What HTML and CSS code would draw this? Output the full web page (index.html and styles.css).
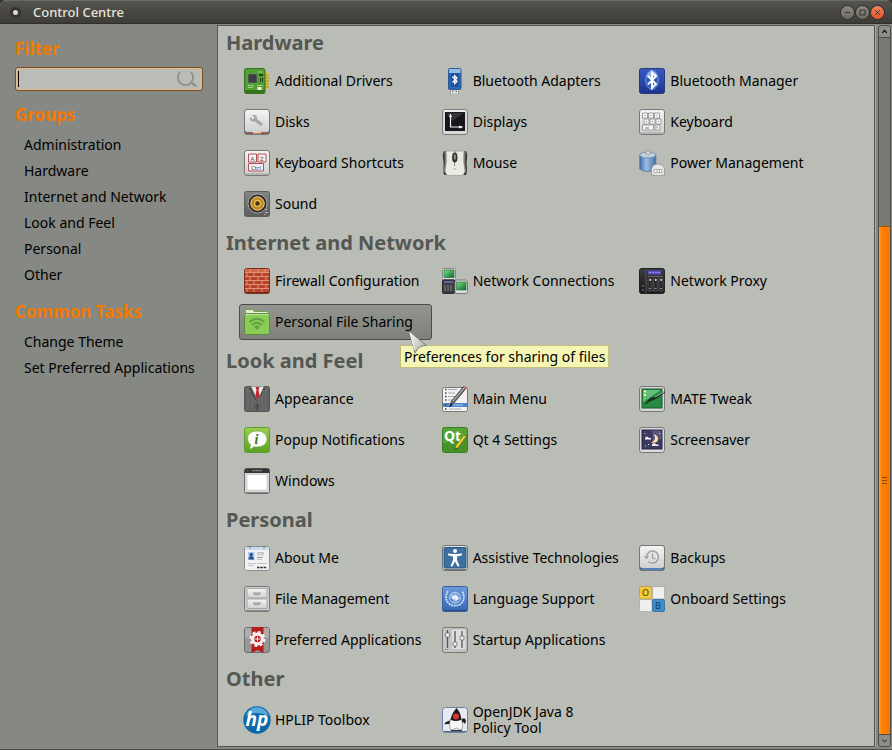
FILE: index.html
```html
<!DOCTYPE html>
<html lang="en-GB">
<head>
<meta charset="utf-8">
<title>Control Centre</title>
<link rel="stylesheet" href="styles.css">
</head>
<body>
<svg class="defs" width="0" height="0" aria-hidden="true">
  <defs>
    <linearGradient id="light" x1="0" y1="0" x2="0" y2="1"><stop offset="0" stop-color="#f4f4f4"/><stop offset="1" stop-color="#cfcfcf"/></linearGradient>
    <linearGradient id="grey" x1="0" y1="0" x2="0" y2="1"><stop offset="0" stop-color="#858585"/><stop offset="1" stop-color="#5c5c5c"/></linearGradient>
    <linearGradient id="dark" x1="0" y1="0" x2="0" y2="1"><stop offset="0" stop-color="#3c3c3e"/><stop offset="1" stop-color="#18181a"/></linearGradient>
    <linearGradient id="green" x1="0" y1="0" x2="0" y2="1"><stop offset="0" stop-color="#9ad04c"/><stop offset="1" stop-color="#5ba022"/></linearGradient>
    <linearGradient id="blue" x1="0" y1="0" x2="0" y2="1"><stop offset="0" stop-color="#3a5bc4"/><stop offset="1" stop-color="#1d348c"/></linearGradient>
    <linearGradient id="sky" x1="0" y1="0" x2="0" y2="1"><stop offset="0" stop-color="#6d9be0"/><stop offset="1" stop-color="#3465b0"/></linearGradient>
    <linearGradient id="drum" x1="0" y1="0" x2="1" y2="0"><stop offset="0" stop-color="#3e6da6"/><stop offset=".4" stop-color="#9dbfe2"/><stop offset="1" stop-color="#426fa6"/></linearGradient>
    <linearGradient id="screen" x1="0" y1="0" x2="1" y2="1"><stop offset="0" stop-color="#7be08a"/><stop offset="1" stop-color="#0d6b28"/></linearGradient>
    <linearGradient id="pointer" x1="0" y1="0" x2="1" y2="1"><stop offset="0" stop-color="#fafafa"/><stop offset="1" stop-color="#a9aba6"/></linearGradient>
  </defs>
</svg>

<div class="window">
  <header class="titlebar">
    <span class="menu-dot"></span>
    <h1 class="title">Control Centre</h1>
    <div class="window-buttons">
      <button class="wbtn" aria-label="Minimise"><svg viewBox="0 0 13 13"><path d="M4 6.5h5"/></svg></button>
      <button class="wbtn" aria-label="Maximise"><svg viewBox="0 0 13 13"><path d="M4 4h5v5h-5z"/></svg></button>
      <button class="wbtn close" aria-label="Close"><svg viewBox="0 0 13 13"><path d="M4.2 4.2l4.6 4.6M8.8 4.2l-4.6 4.6"/></svg></button>
    </div>
  </header>

  <div class="body">
    <aside class="sidebar">
      <label class="side-head" for="filter">Filter</label>
      <div class="search">
        <input id="filter" type="text">
        <svg class="lens" viewBox="0 0 22 18" aria-hidden="true"><path d="M4.200 2a7.600 7.600 0 1 0 10.600 0" fill="none" stroke="#8f928b" stroke-width="1.800"/><path d="M14.500 12.500l2.500-.5 5 4.500h-4.500z" fill="#8f928b"/></svg>
      </div>
      <h2 class="side-head">Groups</h2>
      <ul class="links">
        <li><a href="#administration">Administration</a></li>
        <li><a href="#hardware">Hardware</a></li>
        <li><a href="#internet">Internet and Network</a></li>
        <li><a href="#look">Look and Feel</a></li>
        <li><a href="#personal">Personal</a></li>
        <li><a href="#other">Other</a></li>
      </ul>
      <h2 class="side-head">Common Tasks</h2>
      <ul class="links">
        <li><a href="#theme">Change Theme</a></li>
        <li><a href="#preferred">Set Preferred Applications</a></li>
      </ul>
    </aside>

    <main class="pane">
      <section id="hardware">
        <h2 class="group-head">Hardware</h2>
        <div class="grid">
          <button class="item">
            <svg class="icon" viewBox="0 0 26 26"><path d="M20 4h4.500v17H20z" fill="#e0c23a"/><path d="M20 7h5M20 10h5M20 13h5M20 16h5M20 19h5" stroke="#8c8a2a" stroke-width=".8"/><rect x=".5" y=".5" width="20.500" height="25" rx="2" fill="#4fa02e" stroke="#3a6e22"/><path d="M1 22h20v2q0 1.500-1.500 1.500h-17Q1 25.500 1 24z" fill="#35741d"/><rect x="4" y="6" width="9" height="9" fill="#3b3f42" stroke="#8b9a86" stroke-width=".8" stroke-dasharray="1 .7"/><path d="M15 6h4v2h-4zM16 10h1v4h-1zM18 10h1v4h-1z" fill="#20431a"/><path d="M4 17.500h6M4 19.500h5M13 17.500h6M14 4h5" stroke="#b9dba0" stroke-width=".8"/><rect x="13.500" y="19" width="4" height="3" fill="#f2f2d8"/></svg>
            <span>Additional Drivers</span>
          </button>
          <button class="item">
            <svg class="icon" viewBox="0 0 26 26"><path d="M8.500 20h8v6h-8z" fill="#e4e4e4" stroke="#8e8e8e" stroke-width=".7"/><path d="M10 22.500h1.500v1.500H10zM13.500 22.500H15v1.500h-1.500z" fill="#777"/><rect x="6.500" y=".5" width="12.500" height="21" rx="1.500" fill="#2d67b4" stroke="#2a5795"/><path d="M7 1h11.500v4H7z" fill="#98bbe2"/><rect x="8.500" y="5" width="8.500" height="14" fill="#1d54a2"/><path d="M10.500 8.500l4.500 5-2.300 2.200v-8l2.300 2.200-4.500 4.600" fill="none" stroke="#fff" stroke-width="1.200"/></svg>
            <span>Bluetooth Adapters</span>
          </button>
          <button class="item">
            <svg class="icon" viewBox="0 0 26 26"><rect x=".5" y=".5" width="25" height="25" rx="2" fill="url(#blue)" stroke="#263b80"/><ellipse cx="13" cy="12" rx="6.300" ry="9.500" fill="#2b5cc0" stroke="#86a7ea" stroke-width=".8"/><path d="M7.500 9c1-8 10-8 11 0q-5 2-11 0z" fill="#8daee8"/><path d="M9 8l8 8-4 4V4.500l4 3.800-8 8" fill="none" stroke="#fff" stroke-width="1.900"/></svg>
            <span>Bluetooth Manager</span>
          </button>
          <button class="item">
            <svg class="icon" viewBox="0 0 26 26"><rect x=".5" y=".5" width="25" height="25" rx="2.500" fill="#666" stroke="#777"/><rect x="1" y="1" width="24" height="22" rx="2" fill="url(#light)"/><path d="M3 24h20" stroke="#b8584a" stroke-width="1.200"/><path d="M9 23.700h8" stroke="#ffd2a0" stroke-width="1.200"/><path d="M9.500 9.500l8 6" stroke="#a5a5a5" stroke-width="3"/><circle cx="9.500" cy="9.300" r="2.500" fill="none" stroke="#a5a5a5" stroke-width="2"/><path d="M5.500 5.500l4 3.500" stroke="#e5e5e5" stroke-width="2.500"/><circle cx="17" cy="15.200" r="1.200" fill="#e5e5e5" stroke="#999"/></svg>
            <span>Disks</span>
          </button>
          <button class="item">
            <svg class="icon" viewBox="0 0 26 26"><rect x=".5" y=".5" width="25" height="25" rx="2.500" fill="#d8d8d8" stroke="#7d7d7d"/><path d="M2 2h22" stroke="#fff"/><rect x="3" y="3" width="20" height="19" fill="#17161c"/><path d="M4 4h18L10 12z" fill="#35333b"/><path d="M8.500 5v13h12" stroke="#eee" stroke-width="1.200" fill="none"/><path d="M7 8l1.500-3L10 8zM17 16.500v3l4-1.500z" fill="#fff"/></svg>
            <span>Displays</span>
          </button>
          <button class="item">
            <svg class="icon" viewBox="0 0 26 26"><rect x=".5" y=".5" width="25" height="25" rx="2.500" fill="url(#light)" stroke="#777"/><path d="M2 24h22" stroke="#999"/><g fill="#f8f8f8" stroke="#888" stroke-width=".8"><path d="M3.500 4h5v5h-5zM9.500 4h5v5h-5zM15.500 4h5v5h-5zM5 10h5v5H5zM11 10h5v5h-5zM17 10h5v5h-5zM3.500 16h11v5h-11zM16 16h5v5h-5z"/></g><path d="M5.500 6.500h1M11.500 6.500h1M17.500 6.500h1M7 12.500h1M13 12.500h1M19 12.500h1M6 19h4M18 17.500v2" stroke="#777"/></svg>
            <span>Keyboard</span>
          </button>
          <button class="item">
            <svg class="icon" viewBox="0 0 26 26"><rect x=".5" y=".5" width="25" height="25" rx="2.500" fill="url(#light)" stroke="#777"/><path d="M2 24h22" stroke="#999"/><g fill="#f5f2f2" stroke="#b45055"><path d="M4.500 4h8v8h-8zM14 4h8v8h-8zM4.500 13.500h15v7.500h-15z"/></g><text x="6.500" y="10.500" class="t-key">A</text><text x="16" y="10.500" class="t-key">Z</text><text x="7" y="19.500" class="t-key">Ctrl</text></svg>
            <span>Keyboard Shortcuts</span>
          </button>
          <button class="item">
            <svg class="icon" viewBox="0 0 26 26"><path d="M2 1h22q2 3 1 7-1 5 0 10 0 5-1 7H2.500q-1.500-2-1-7Q2 13 1 8 0 4 2 1z" fill="#34342f"/><path d="M3 1q1 11-.5 21M23 1q-1 11 .5 21" stroke="#8d8c86" fill="none"/><path d="M4 1h18q-1 11 1 20-1 4-3 4.500H6Q4 25 3 21 5 12 4 1z" fill="#ebeae1" stroke="#9a9a90" stroke-width=".7"/><path d="M13 1v3M12.500 11v5" stroke="#888"/><ellipse cx="12.800" cy="7.500" rx="2.700" ry="5" fill="#34342f"/><ellipse cx="12.800" cy="7" rx="1" ry="3" fill="#999"/><path d="M11.500 18l2 2M13.500 18l-2 2" stroke="#bbb"/></svg>
            <span>Mouse</span>
          </button>
          <button class="item">
            <svg class="icon" viewBox="0 0 26 26"><path d="M17 6q5-5 5 1t-3 8" stroke="#b9bcbc" stroke-width="2" fill="none"/><path d="M.8 5v14q8 5 16 0V5z" fill="url(#drum)" stroke="#4a6d94" stroke-width=".8"/><ellipse cx="8.800" cy="5" rx="8" ry="3" fill="#bfd0df" stroke="#6d8caa" stroke-width=".8"/><path d="M7 1h4v3H7z" fill="#ddd" stroke="#888" stroke-width=".6"/><path d="M12.500 25v-6q1-5 6.500-5t6.500 5v6q-6 1.500-13 0z" fill="#e6e6e2" stroke="#8e918c" stroke-width=".8"/><path d="M15 19.500h8v3h-8z" fill="#fff" stroke="#999" stroke-width=".8"/><path d="M18 20v2M20.500 20v2" stroke="#888" stroke-width=".7"/></svg>
            <span>Power Management</span>
          </button>
          <button class="item">
            <svg class="icon" viewBox="0 0 26 26"><rect x=".5" y=".5" width="25" height="25" rx="2" fill="url(#grey)" stroke="#5e5e5e"/><circle cx="13.500" cy="12.500" r="9.500" fill="#292929" stroke="#aaa"/><circle cx="13.500" cy="12.500" r="6.800" fill="#c98e25" stroke="#e9ca80"/><circle cx="13.500" cy="12.500" r="4.500" fill="#e2b64f" stroke="#a87a25"/><circle cx="13.500" cy="12.500" r="2.200" fill="#463211"/><path d="M21.500 21.500h2M22 18.500h1M20.500 23.500h1" stroke="#ddd"/></svg>
            <span>Sound</span>
          </button>
        </div>
      </section>

      <section id="internet">
        <h2 class="group-head">Internet and Network</h2>
        <div class="grid">
          <button class="item">
            <svg class="icon" viewBox="0 0 26 26"><rect x=".5" y=".5" width="25" height="25" rx="2" fill="#b8432a" stroke="#84301f"/><path d="M1 1h24v4H1z" fill="#d26a4e"/><path d="M1 4.500h24M1 8.500h24M1 12.500h24M1 16.500h24M1 20.500h24M6 1v3.500M14 1v3.500M21 1v3.500M3 4.500v4M10 4.500v4M18 4.500v4M6 8.500v4M14 8.500v4M22 8.500v4M3 12.500v4M10 12.500v4M18 12.500v4M6 16.500v4M14 16.500v4M22 16.500v4M3 20.500V25M10 20.500V25M18 20.500V25" stroke="#df9c84" stroke-width=".9"/><path d="M1 24.500h24" stroke="#6e2a1a"/></svg>
            <span>Firewall Configuration</span>
          </button>
          <button class="item">
            <svg class="icon" viewBox="0 0 26 26"><rect x=".5" y=".5" width="13" height="11" rx="1" fill="#ddd" stroke="#888"/><path d="M2 2h10v7.500H2z" fill="url(#screen)" stroke="#1d6a35" stroke-width=".6"/><rect x=".5" y="12" width="12" height="13.500" rx="1" fill="#3b3b46" stroke="#2b2b30"/><path d="M2 14h9" stroke="#7671b8" stroke-width="1.500"/><path d="M3 17v6M6 17v6M9 17v6" stroke="#888"/><rect x="13" y="12" width="12.500" height="13.500" rx="2" fill="#ddd" stroke="#777"/><path d="M14.500 14H24v8h-9.500z" fill="url(#screen)" stroke="#1d6a35" stroke-width=".6"/></svg>
            <span>Network Connections</span>
          </button>
          <button class="item">
            <svg class="icon" viewBox="0 0 26 26"><rect x=".5" y=".5" width="25" height="25" rx="2" fill="url(#dark)" stroke="#222"/><path d="M7 1v24" stroke="#565658"/><rect x="9" y="2.500" width="13" height="4" fill="#544fc4"/><path d="M10 4.500h11" stroke="#8f8cf0" stroke-dasharray="2 1"/><path d="M9 8.500h15" stroke="#666"/><path d="M9 11h4v12H9zM14.500 11h4v12h-4zM20 11h4v12h-4z" fill="#2b2b2d" stroke="#59595b" stroke-width=".7"/><path d="M10.500 12h1.500M16 12h1.500M21.500 12H23" stroke="#fff" stroke-width="1.500"/><path d="M10 20.500h2M15.500 20.500h2M21 20.500h2" stroke="#888"/><circle cx="4" cy="18" r="1" fill="#666"/><circle cx="4" cy="22" r="1" fill="#666"/></svg>
            <span>Network Proxy</span>
          </button>
          <div class="item-wrap">
            <button class="item hover" aria-describedby="tip">
              <svg class="icon" viewBox="0 0 26 26"><path d="M1.500 6V1.500Q1.500.5 2.500.5h6q1 0 1.500 2H24V6z" fill="#dff0c8" stroke="#73a548"/><path d="M3 3.500h20V7H3z" fill="#eef3e8"/><rect x=".5" y="4.500" width="25" height="21" rx="2" fill="#8bcb58" stroke="#5a8d38"/><path d="M1.500 5.500h23" stroke="#bbe59a"/><path d="M5.500 13q7.500-6.500 15 0M8 16q5-4.500 10 0" fill="none" stroke="#5f9f3d" stroke-width="1.800"/><path d="M10 17.500q3-2 6 0L13 21z" fill="#5f9f3d"/></svg>
              <span>Personal File Sharing</span>
            </button>
            <div class="tooltip" id="tip" role="tooltip">Preferences for sharing of files</div>
            <svg class="cursor" viewBox="0 0 20 24" aria-hidden="true"><path d="M1 1l17.500 14.500q-8-.5-11.500 7.500Z" fill="url(#pointer)" stroke="#747670" stroke-width=".9"/><path d="M2 2.500l4.500 17" stroke="#fff" fill="none"/></svg>
          </div>
        </div>
      </section>

      <section id="look">
        <h2 class="group-head">Look and Feel</h2>
        <div class="grid">
          <button class="item">
            <svg class="icon" viewBox="0 0 26 26"><rect x=".5" y=".5" width="25" height="25" rx="2" fill="#626262" stroke="#555"/><path d="M4 1v24M22 1v24M8 8v17M18 8v17" stroke="#757575" stroke-width=".7"/><path d="M7 .5h13L13.500 15z" fill="#ececf0"/><path d="M11.500 1h4l-1 3 1.500 7-2.500 4-2.500-4 1.500-7z" fill="#c22730"/><path d="M7 .5L3 4l4 1-1 2 7 10.500L20 7l-1-2 4-1-3-3.500L13.500 15z" fill="#4b4b4b" stroke="#868686" stroke-width=".6"/><path d="M13.500 17v8" stroke="#404040"/><circle cx="12" cy="20" r=".8" fill="#333"/></svg>
            <span>Appearance</span>
          </button>
          <button class="item">
            <svg class="icon" viewBox="0 0 26 26"><rect x=".5" y="1.500" width="25" height="24" rx="2" fill="#f2f2f2" stroke="#777"/><path d="M1 17h24v4H1z" fill="#4d86cf"/><path d="M6 3.500h9M6 7h7M6 10.500h9M6 14h7M7 23h12" stroke="#aaa"/><path d="M7 19h14" stroke="#a9c8ef"/><path d="M3 3.500h1.500M3 7h1.500M3 10.500h1.500M3 14h1.500M3 19h1.500M3 23h1.500" stroke="#444" stroke-width="1.700"/><path d="M7.500 21l2-6L21.500.5l2.500 2L12 17z" fill="#686a6c" stroke="#333" stroke-width=".7"/><path d="M11 15L22 2" stroke="#c7c7c7"/><path d="M7.500 21l1.200-3.500 2 1.500z" fill="#222"/><path d="M21 .5h3l.5 2.500-1.500 1z" fill="#c06a65"/></svg>
            <span>Main Menu</span>
          </button>
          <button class="item">
            <svg class="icon" viewBox="0 0 26 26"><rect x=".5" y=".5" width="25" height="25" rx="2.500" fill="#d7d7d7" stroke="#777"/><rect x="3" y="3" width="20" height="19" fill="#258a42" stroke="#185b2b"/><path d="M4 4h18L4 16z" fill="#62bd78"/><path d="M5 5.500h2M5 9h2" stroke="#fbf4a8" stroke-width="2"/><path d="M6 18l5-5.500 4-1L26 6l-9 6.500-6 2.500z" fill="#263128" stroke="#172319" stroke-width=".7"/><path d="M16 11l9-5" stroke="#aab3ac"/></svg>
            <span>MATE Tweak</span>
          </button>
          <button class="item">
            <svg class="icon" viewBox="0 0 26 26"><rect x=".5" y=".5" width="25" height="25" rx="2" fill="url(#green)" stroke="#609b30"/><path d="M13 4c6 0 10 3.500 10 8s-4 8-10 8q-1.500 0-3-.3Q8 22 5 22q1.500-1.500 1.500-4Q3.500 15.500 3.500 12 3.500 4 13 4z" fill="#fafafa" stroke="#6aa13b" stroke-width=".6"/><text x="10.500" y="17" class="t-info">i</text></svg>
            <span>Popup Notifications</span>
          </button>
          <button class="item">
            <svg class="icon" viewBox="0 0 26 26"><rect x=".5" y=".5" width="25" height="25" rx="2" fill="#55a536" stroke="#3d8024"/><path d="M1 16q12 2 24-9v16q0 2-2 2H3q-2 0-2-2z" fill="#469229"/><text x="2" y="14" class="t-qt">Qt</text><path d="M13 23l1-4.500L22 8l2 1.500-8 11z" fill="#f1d03b" stroke="#8a7a20" stroke-width=".7"/><path d="M13 23l.7-2.500 1.500 1z" fill="#333"/></svg>
            <span>Qt 4 Settings</span>
          </button>
          <button class="item">
            <svg class="icon" viewBox="0 0 26 26"><rect x=".5" y=".5" width="25" height="25" rx="2.500" fill="#dcdcdc" stroke="#777"/><rect x="3" y="3" width="20" height="19" fill="#3d3a62" stroke="#28263f"/><path d="M13 3.500h9.500V12L14 14z" fill="#57547f"/><path d="M14.500 7q4 6-2.500 8.500 7 1.500 7-4Q18.500 8 14.500 7z" fill="#ffe3a0"/><path d="M6 11q2-3 4 0h2v1.500H6zM13 17.500q2-3 4 0h2.500V19H13z" fill="#f5f5ff"/><path d="M5.500 6.500h1M9 17.500h1M20 6.500h1M6 19h1" stroke="#ddd"/></svg>
            <span>Screensaver</span>
          </button>
          <button class="item">
            <svg class="icon" viewBox="0 0 26 26"><rect x=".5" y=".5" width="25" height="25" rx="2" fill="#d9d9d9" stroke="#6d6d6d"/><path d="M.5 5V2.500q0-2 2-2h21q2 0 2 2V5z" fill="#343434"/><path d="M8 2.700h10" stroke="#aaa" stroke-dasharray="1.500 .5"/><path d="M3 2.700h1.500" stroke="#c65a3a"/><rect x="3" y="6.500" width="20" height="15.500" fill="#fff" stroke="#c4c4c4" stroke-width=".6"/><path d="M2 24.500h22" stroke="#888"/></svg>
            <span>Windows</span>
          </button>
        </div>
      </section>

      <section id="personal">
        <h2 class="group-head">Personal</h2>
        <div class="grid">
          <button class="item">
            <svg class="icon" viewBox="0 0 26 26"><rect x=".5" y="1.500" width="25" height="24" rx="2" fill="#f0f1f2" stroke="#8b8d8e"/><path d="M1 2h24v3H1z" fill="#c8dcec"/><path d="M6 .5v3M20 .5v3" stroke="#777"/><rect x="4" y="7" width="6.500" height="8" fill="#b3cdee"/><circle cx="7.200" cy="9.500" r="1.700" fill="#285590"/><path d="M4.500 14.500q0-3.500 2.700-3.500t2.800 3.500z" fill="#285590"/><path d="M13 8h7M13 12.500h6" stroke="#999"/><path d="M13 10h7M13 14.500h5M4 18.500h8M4 20.500h6M13 18.500h10" stroke="#c4c4c4"/><path d="M13 22.500h10" stroke="#333" stroke-width="1.500" stroke-dasharray="2.500 .8"/></svg>
            <span>About Me</span>
          </button>
          <button class="item">
            <svg class="icon" viewBox="0 0 26 26"><rect x=".5" y=".5" width="25" height="25" rx="2.500" fill="#e7e7e7" stroke="#6e7174"/><rect x="2" y="2.500" width="22" height="20.500" rx="1" fill="#3d719f" stroke="#285580"/><circle cx="13" cy="6" r="2" fill="#fff"/><path d="M6 8.500l5 .5h4l5-.5v1.800l-5 1.200v3.500l2.500 6-1.700.7L13 16.500l-2.800 5.200-1.700-.7L11 15v-3.500l-5-1.200z" fill="#fff"/><path d="M2 24.500h22" stroke="#777"/></svg>
            <span>Assistive Technologies</span>
          </button>
          <button class="item">
            <svg class="icon" viewBox="0 0 26 26"><rect x=".5" y=".5" width="25" height="25" rx="2.500" fill="#555f6b" stroke="#777"/><rect x="1" y="1" width="24" height="22" rx="2" fill="url(#light)"/><path d="M3 24h20" stroke="#4f8fd4" stroke-width="1.500"/><path d="M7.500 12a6 6 0 1 1 2 4.500" fill="none" stroke="#a2a2a2" stroke-width="1.500"/><path d="M5 11h5l-2.500 3.500z" fill="#a2a2a2"/><path d="M13.500 8v4.500l3 1.500" fill="none" stroke="#a2a2a2" stroke-width="1.300"/></svg>
            <span>Backups</span>
          </button>
          <button class="item">
            <svg class="icon" viewBox="0 0 26 26"><rect x=".5" y=".5" width="25" height="25" rx="2.500" fill="#cfcfcf" stroke="#777"/><rect x="3" y="2.500" width="20" height="9.500" rx="1" fill="url(#light)" stroke="#999" stroke-width=".8"/><rect x="3" y="13" width="20" height="9.500" rx="1" fill="url(#light)" stroke="#999" stroke-width=".8"/><path d="M9 7q1 1.800 4 1.800T17 7zM9 17q1 1.800 4 1.800t4-1.800z" fill="#c4c4c4" stroke="#8a8a8a" stroke-width=".8"/><path d="M2 24.500h22" stroke="#888"/></svg>
            <span>File Management</span>
          </button>
          <button class="item">
            <svg class="icon" viewBox="0 0 26 26"><rect x=".5" y=".5" width="25" height="25" rx="2" fill="url(#sky)" stroke="#3b5f9e"/><g fill="none" stroke="#d5e4fa"><circle cx="13" cy="11.800" r="5.500" stroke-width=".8"/><path d="M7.500 12h11M13 6.500v11M9.500 8q3.500 3 7 0M9.500 16q3.500-3 7 0" stroke-width=".6"/><path d="M6 5Q1.500 13 7.500 18q2.500 2 5.500 1.500Q16 20 18.500 18 24.500 13 20 5" stroke-width="1.700" stroke-dasharray="2 .7"/></g><path d="M9 9l3 1 1-1 3 1 1 3-3 2-1-2-2 1z" fill="#e9f1fc"/><path d="M1 24.500h24" stroke="#284b83"/></svg>
            <span>Language Support</span>
          </button>
          <button class="item">
            <svg class="icon" viewBox="0 0 26 26"><rect x=".5" y=".5" width="12.500" height="12.500" rx="1.500" fill="#f3c93d" stroke="#b59d4d" stroke-width=".8"/><rect x="13.500" y=".5" width="12" height="12.500" rx="1.500" fill="#efefef" stroke="#aaa" stroke-width=".8"/><rect x=".5" y="13.500" width="12.500" height="12" rx="1.500" fill="#efefef" stroke="#aaa" stroke-width=".8"/><rect x="13.500" y="13.500" width="12" height="12" rx="1.500" fill="#3c8fc8" stroke="#2c6c99" stroke-width=".8"/><text x="3" y="9.500" class="t-board">O</text><text x="16" y="22.500" class="t-board b">B</text></svg>
            <span>Onboard Settings</span>
          </button>
          <button class="item">
            <svg class="icon" viewBox="0 0 26 26"><rect x=".5" y=".5" width="25" height="25" rx="2.500" fill="#979797" stroke="#707070"/><path d="M1 3q0-2 2-2h20q2 0 2 2v8H1z" fill="#adadad"/><path d="M7.500 0h12v26l-6-3-6 3z" fill="#b51c1c"/><circle cx="13.500" cy="12" r="6.800" fill="none" stroke="#f6eeee" stroke-width="2.500" stroke-dasharray="3 2.340"/><circle cx="13.500" cy="12" r="4.800" fill="none" stroke="#f6eeee" stroke-width="3.200"/><circle cx="13.500" cy="12" r="2.600" fill="#b51c1c"/><path d="M13.500 9.500v5M11 12h5" stroke="#f6eeee"/></svg>
            <span>Preferred Applications</span>
          </button>
          <button class="item">
            <svg class="icon" viewBox="0 0 26 26"><rect x=".5" y=".5" width="25" height="25" rx="2.500" fill="#c6c6c6" stroke="#777"/><rect x="9" y="2" width="15" height="21" rx="1" fill="#dedede" stroke="#aaa" stroke-width=".7"/><path d="M5.500 3v18M13 4v17M20 4v17" stroke="#555" stroke-width="1.300"/><g fill="#f1f1f1" stroke="#666" stroke-width=".8"><rect x="3.500" y="6" width="4" height="4" rx="1"/><rect x="11" y="15" width="4" height="4" rx="1"/><rect x="18" y="9" width="4" height="4" rx="1"/></g><path d="M3 22.500h4" stroke="#777" stroke-dasharray="1 1"/></svg>
            <span>Startup Applications</span>
          </button>
        </div>
      </section>

      <section id="other">
        <h2 class="group-head">Other</h2>
        <div class="grid">
          <button class="item">
            <svg class="icon spill" viewBox="0 0 26 26"><circle cx="13" cy="13" r="13.700" fill="#0d67a8"/><path d="M1.500 9Q5 .5 13 .3T25 9Q12 3 1.500 9z" fill="#5aa9d8"/><text x="1.500" y="18.500" class="t-hp">hp</text></svg>
            <span>HPLIP Toolbox</span>
          </button>
          <button class="item">
            <svg class="icon" viewBox="0 0 26 26"><rect x=".5" y=".5" width="25" height="25" rx="3" fill="#e7eaf1" stroke="#6f82a5"/><path d="M2 24.500h22" stroke="#52698f"/><path d="M9 13l-5 2-2 2.500 2.500-.5L9 17zM19 13q4-4 5 1l-1 3-2-2-3 2z" fill="#1c1c1e"/><path d="M8.500 12h11q2 7 .5 11-3-.5-5.500-2-3 2-6 2-2-5 0-11z" fill="#f7f7f4" stroke="#777" stroke-width=".6"/><path d="M14.500 1q-4.500 5-6 11.500 5 3 11 0Q18.500 5 14.500 1z" fill="#1c1c1e"/><circle cx="14" cy="9.500" r="3" fill="#da3430"/><path d="M9 23.500h11" stroke="#333"/></svg>
            <span class="two-line">OpenJDK Java 8 Policy Tool</span>
          </button>
        </div>
      </section>
    </main>

    <div class="scrollbar">
      <button class="step" aria-label="Scroll up"><svg viewBox="0 0 12 11"><path d="M3.500 7L6 4.500 8.500 7"/></svg></button>
      <div class="trough"><div class="thumb"><i></i><i></i><i></i></div></div>
      <button class="step down" aria-label="Scroll down"><svg viewBox="0 0 12 11"><path d="M3.500 4.500L6 7l2.500-2.500"/></svg></button>
    </div>
  </div>
</div>
</body>
</html>
```
FILE: styles.css
```css
* {
  box-sizing: border-box;
}

body {
  margin: 0;
  background: #33322e;
  color: #000;
  font: 14px/16px "Noto Sans", "Open Sans", sans-serif;
}

button {
  margin: 0;
  padding: 0;
  border: 0;
  background: none;
  color: inherit;
  font: inherit;
  text-align: left;
}

h1,
h2,
ul {
  margin: 0;
  padding: 0;
  list-style: none;
}

.defs {
  position: absolute;
}

.window {
  display: flex;
  flex-direction: column;
  min-height: 100vh;
  background: #868883;
  border-radius: 6px 6px 0 0;
  overflow: hidden;
}

/* Title bar */
.titlebar {
  display: flex;
  align-items: center;
  height: 24px;
  padding: 0 8px 0 10px;
  background: linear-gradient(#55534d, #3d3c37);
  border-top: 1px solid #6a6963;
  border-bottom: 1px solid #2f2e2a;
}

.menu-dot {
  width: 11px;
  height: 11px;
  border: 3px solid #35342f;
  border-radius: 50%;
  background: #dfdbd2;
}

.title {
  flex: 1;
  margin-left: 12px;
  color: #e6e3dc;
  font-size: 13px;
  font-weight: 500;
}

.window-buttons {
  display: flex;
  gap: 2px;
}

.wbtn {
  width: 13px;
  height: 13px;
  border-radius: 50%;
  background: linear-gradient(#8b8982, #6b6963);
  box-shadow: 0 0 0 1px #33322e;
}

.wbtn svg {
  display: block;
  fill: none;
  stroke: #35342f;
}

.wbtn.close {
  background: linear-gradient(#f4845d, #e2542a);
}

/* Layout */
.body {
  flex: 1;
  display: flex;
  padding: 1px 1px 2px 0;
  border-bottom: 1px solid #4c4d49;
}

.sidebar {
  flex: none;
  width: 217px;
  padding: 8px 14px 0 15px;
}

.side-head {
  display: block;
  height: 33px;
  color: #f57900;
  font-size: 17px;
  font-weight: 700;
  line-height: 31px;
}

.search {
  position: relative;
  margin: 1px 0 8px;
}

.search input {
  display: block;
  width: 100%;
  height: 24px;
  padding: 0 28px 0 3px;
  border: 1px solid #7d4d1e;
  border-radius: 3px;
  background: #babdb6;
  box-shadow: inset 0 0 0 1px #e0bd94;
  font: inherit;
}

.search::before {
  content: "";
  position: absolute;
  top: 4px;
  left: 3px;
  width: 1px;
  height: 16px;
  background: #000;
}

.lens {
  position: absolute;
  top: 3px;
  right: 5px;
  width: 22px;
  height: 18px;
}

.links {
  padding: 0 0 8px 9px;
}

.links li {
  line-height: 26px;
  white-space: nowrap;
}

.links a {
  color: inherit;
  text-decoration: none;
}

/* Launcher pane */
.pane {
  flex: 1;
  padding-top: 1px;
  border: 1px solid #555753;
  background: #babdb6;
  box-shadow: 1px 0 0 #a5a8a1;
}

.group-head {
  height: 33px;
  padding-left: 8px;
  color: #555753;
  font-size: 20px;
  font-weight: 700;
  line-height: 31px;
}

.grid {
  display: grid;
  grid-template-columns: repeat(3, 1fr);
  gap: 5px;
  padding: 3px 47px 5px 21px;
}

.item-wrap {
  position: relative;
}

.item {
  display: flex;
  align-items: center;
  gap: 5px;
  width: 100%;
  min-height: 36px;
  padding: 0 4px;
  border: 1px solid transparent;
  border-radius: 3px;
  white-space: nowrap;
}

.item.hover {
  border-color: #4b4d49;
  background: linear-gradient(#929590, #7d807b);
}

.two-line {
  max-width: 128px;
  padding: 4px 0;
  white-space: normal;
}

.icon {
  flex: none;
  width: 26px;
  height: 26px;
}

.icon.spill {
  overflow: visible;
}

.tooltip {
  position: absolute;
  top: 41px;
  left: 161px;
  z-index: 1;
  padding: 2px 3px;
  border: 1px solid #c2bd78;
  background: #f5f5b5;
  line-height: 17px;
  white-space: nowrap;
}

.cursor {
  position: absolute;
  top: 26px;
  left: 169px;
  z-index: 2;
  width: 20px;
  height: 24px;
}

/* Lettering inside icons */
.t-key {
  font: 6px "Noto Sans", sans-serif;
  fill: #444;
}

.t-info {
  font: italic 700 14px "Liberation Serif", serif;
  fill: #46741f;
}

.t-qt {
  font: 700 14px "Noto Sans", sans-serif;
  fill: #fff;
}

.t-board {
  font: 9px "Noto Sans", sans-serif;
  fill: #4a3d08;
}

.t-board.b {
  fill: #123c5c;
}

.t-hp {
  font: italic 700 19px "Open Sans", sans-serif;
  fill: #fff;
}

/* Scroll bar */
.scrollbar {
  flex: none;
  display: flex;
  flex-direction: column;
  width: 13px;
  margin-left: 3px;
  border: 1px solid #4c4d49;
  border-radius: 3px;
  background: #777974;
}

.step {
  flex: none;
  height: 11px;
  background: #8b8e88;
  border-radius: 2px 2px 0 0;
}

.step.down {
  border-radius: 0 0 2px 2px;
}

.step svg {
  display: block;
  width: 11px;
  height: 11px;
  fill: none;
  stroke: #111;
  stroke-width: 1.5;
}

.step.down svg {
  stroke: #4c4d49;
}

.trough {
  flex: 1;
  display: flex;
  flex-direction: column;
  justify-content: flex-end;
  border-top: 1px solid #4c4d49;
  border-bottom: 1px solid #4c4d49;
}

.thumb {
  display: flex;
  flex-direction: column;
  align-items: center;
  justify-content: center;
  gap: 2px;
  height: 73%;
  border-top: 1px solid #a85500;
  background: linear-gradient(90deg, #ff9a2e, #ff8000 30%, #f57900);
}

.thumb i {
  width: 5px;
  height: 1px;
  background: #8a4500;
}
```
